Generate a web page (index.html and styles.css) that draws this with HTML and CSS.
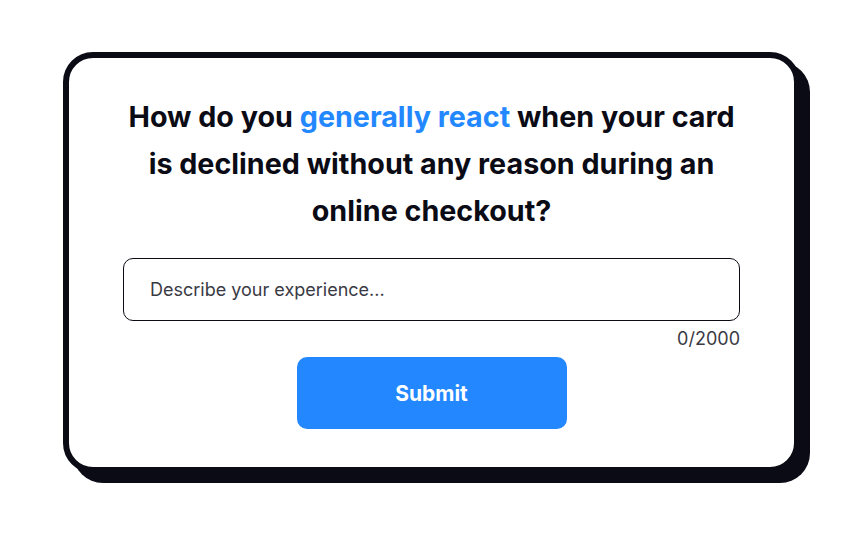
FILE: index.html
```html
<!DOCTYPE html>
<html lang="en">
<head>
<meta charset="utf-8">
<title>Survey question</title>
<link rel="stylesheet" href="styles.css">
</head>
<body>
<main class="stage">
  <section class="card">
    <h1 class="question">How do you <span class="accent">generally react</span> when your card is declined without any reason during an online checkout?</h1>
    <div class="field">
      <div class="input">Describe your experience...</div>
      <div class="counter">0/2000</div>
    </div>
    <button class="submit" type="button">Submit</button>
  </section>
</main>
</body>
</html>
```

FILE: styles.css
```css
* { box-sizing: border-box; }
html, body { margin: 0; padding: 0; background: #ffffff; }
body { font-family: Inter, "Noto Sans", "Liberation Sans", sans-serif; color: #0b0b16; }
.stage { padding: 52px 0 57px 63px; min-height: 540px; }
.card {
  width: 737px;
  height: 421px;
  border: 6px solid #0b0b16;
  border-radius: 30px;
  box-shadow: 10px 10px 0 #0b0b16;
  background: #fff;
  padding: 35px 54px 0;
  display: flex;
  flex-direction: column;
  align-items: center;
}
.question {
  margin: 0 -6px;
  width: 626px;
  font-size: 28.7px;
  font-weight: 700;
  line-height: 47px;
  text-align: center;
  letter-spacing: 0;
  color: #0b0b16;
}
.accent { color: #2388ff; }
.field { width: 100%; margin-top: 24px; display: flex; flex-direction: column; }
.input {
  height: 63px;
  border: 1.5px solid #0b0b16;
  border-radius: 10px;
  padding: 0 26px;
  display: flex;
  align-items: center;
  font-size: 18px;
  color: #3a3a44;
}
.counter {
  align-self: flex-end;
  margin-top: 7px;
  font-size: 18px;
  color: #3a3a44;
  line-height: 22px;
}
.submit {
  margin-top: 7px;
  width: 270px;
  height: 72px;
  border: none;
  border-radius: 10px;
  background: #2388ff;
  color: #fff;
  font-family: inherit;
  font-size: 21px;
  font-weight: 700;
}
```
